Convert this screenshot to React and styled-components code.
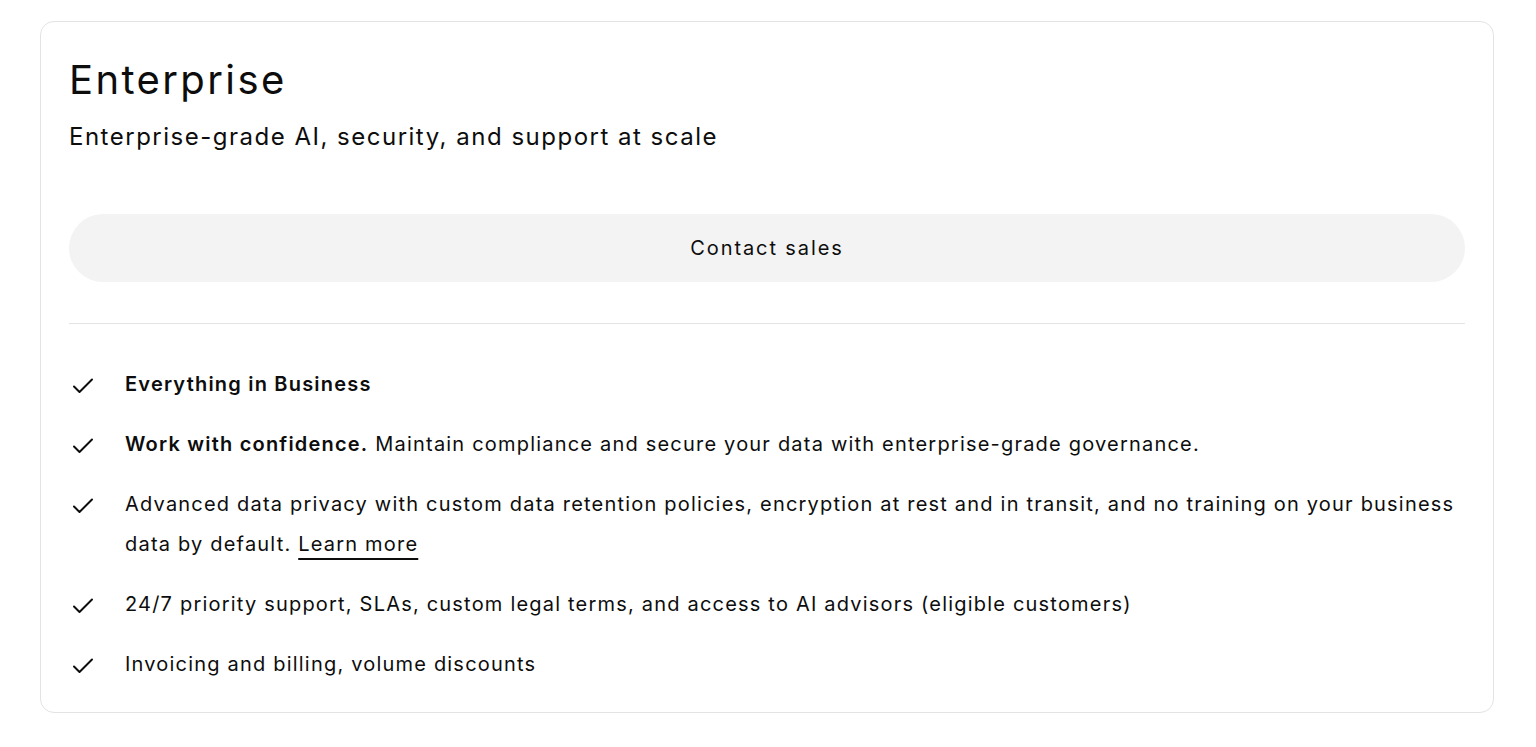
import React from "react";
import styled, { createGlobalStyle } from "styled-components";

const GlobalStyle = createGlobalStyle`
  body {
    margin: 0;
    background: #ffffff;
    font-family: Inter, "Noto Sans", sans-serif;
    color: #0d0d0d;
  }
`;

const Page = styled.div`
  padding: 21px 42px 26px 40px;
`;

const Card = styled.section`
  border: 1.5px solid #e3e3e3;
  border-radius: 14px;
  padding: 26px 28px 28px 28px;
`;

const Title = styled.h2`
  margin: 0;
  font-size: 40px;
  font-weight: 400;
  line-height: 64px;
  letter-spacing: 2.4px;
`;

const Subtitle = styled.p`
  margin: 9px 0 0;
  font-size: 24px;
  line-height: 32px;
  letter-spacing: 1.5px;
`;

const Button = styled.button`
  display: block;
  width: 100%;
  height: 68px;
  margin-top: 61px;
  border: none;
  border-radius: 999px;
  background: #f3f3f3;
  font-family: inherit;
  letter-spacing: 1.9px;
  font-size: 20px;
  color: #0d0d0d;
  cursor: pointer;
`;

const Divider = styled.hr`
  margin: 41px 0 40px;
  border: none;
  border-top: 1.5px solid #e3e3e3;
`;

const List = styled.ul`
  list-style: none;
  margin: 0;
  padding: 0;
  display: flex;
  flex-direction: column;
  gap: 20px;
`;

const Item = styled.li`
  display: flex;
  align-items: flex-start;
  gap: 31px;
  font-size: 20px;
  line-height: 40px;
  letter-spacing: 1.2px;
`;

const Check = styled.span`
  flex: none;
  display: flex;
  align-items: center;
  height: 40px;
  padding: 4px 0 0 3px;
  box-sizing: border-box;
`;

const Strong = styled.strong`
  font-weight: 600;
`;

const Link = styled.a`
  color: inherit;
  text-decoration: underline;
  text-underline-offset: 7px;
  text-decoration-thickness: 1.5px;
`;

const CheckIcon = () => (
  <svg width="22" height="18" viewBox="0 0 22 18" fill="none">
    <path
      d="M2 9.5L7.5 15L20 2.5"
      stroke="#0d0d0d"
      strokeWidth="2"
      strokeLinecap="round"
      strokeLinejoin="round"
    />
  </svg>
);

const features = [
  <Strong>Everything in Business</Strong>,
  <>
    <Strong>Work with confidence.</Strong> Maintain compliance and secure your
    data with enterprise-grade governance.
  </>,
  <>
    Advanced data privacy with custom data retention policies, encryption at
    rest and in transit, and no training on your business data by default.{" "}
    <Link href="#">Learn more</Link>
  </>,
  <>
    24/7 priority support, SLAs, custom legal terms, and access to AI advisors
    (eligible customers)
  </>,
  <>Invoicing and billing, volume discounts</>,
];

export default function App() {
  return (
    <Page>
      <GlobalStyle />
      <Card>
        <Title>Enterprise</Title>
        <Subtitle>Enterprise-grade AI, security, and support at scale</Subtitle>
        <Button>Contact sales</Button>
        <Divider />
        <List>
          {features.map((f, i) => (
            <Item key={i}>
              <Check>
                <CheckIcon />
              </Check>
              <span>{f}</span>
            </Item>
          ))}
        </List>
      </Card>
    </Page>
  );
}
